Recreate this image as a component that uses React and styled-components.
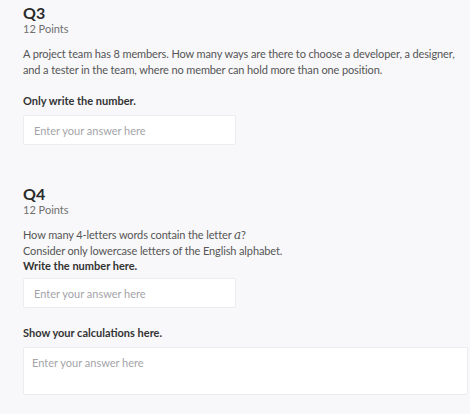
import React from "react";
import styled, { createGlobalStyle } from "styled-components";

const Global = createGlobalStyle`
  html, body { margin: 0; padding: 0; background: #f8f8fa; }
  body { font-family: Lato, "Open Sans", Arial, sans-serif; color: #4a4a4a; }
`;

const Page = styled.div`
  padding: 3px 2px 0 23px;
  display: flex;
  flex-direction: column;
`;

const Question = styled.section`
  display: flex;
  flex-direction: column;
  margin-bottom: ${(p) => p.$gap || 0}px;
`;

const Title = styled.h2`
  margin: 0;
  font-size: 16px;
  line-height: 19px;
  font-weight: 700;
  color: #2b2b2b;
`;

const Points = styled.div`
  font-size: 11px;
  line-height: 14px;
  color: #707070;
  margin-bottom: ${(p) => p.$mb}px;
`;

const Body = styled.p`
  margin: 0;
  font-size: 11px;
  line-height: ${(p) => p.$lh}px;
  letter-spacing: -0.12px;
  color: #555;
`;

const Label = styled.div`
  font-size: 11px;
  line-height: 15px;
  font-weight: 700;
  color: #333;
  margin-top: ${(p) => p.$mt || 0}px;
  margin-bottom: ${(p) => p.$mb || 0}px;
`;

const Input = styled.div`
  box-sizing: border-box;
  width: 213px;
  height: 30px;
  background: #fff;
  border: 1px solid #ececef;
  border-radius: 2px;
  padding: 0 10px;
  display: flex;
  align-items: center;
  font-size: 11px;
  color: #a4a4a8;
`;

const TextArea = styled.div`
  box-sizing: border-box;
  width: 445px;
  height: 48px;
  background: #fff;
  border: 1px solid #ececef;
  border-radius: 2px;
  padding: 8px 8px;
  font-size: 11px;
  line-height: 14px;
  color: #a4a4a8;
`;

const MathA = styled.span`
  font-family: "DejaVu Serif", "Liberation Serif", serif;
  font-style: italic;
  font-size: 12px;
`;

export default function App() {
  return (
    <>
      <Global />
      <Page>
        <Question $gap={39}>
          <Title>Q3</Title>
          <Points $mb={10}>12 Points</Points>
          <Body $lh={16}>
            A project team has 8 members. How many ways are there to choose a developer, a designer,
            <br />
            and a tester in the team, where no member can hold more than one position.
          </Body>
          <Label $mt={15} $mb={7}>Only write the number.</Label>
          <Input>Enter your answer here</Input>
        </Question>
        <Question>
          <Title>Q4</Title>
          <Points $mb={10}>12 Points</Points>
          <Body $lh={15}>
            How many 4-letters words contain the letter <MathA>a</MathA>?
            <br />
            Consider only lowercase letters of the English alphabet.
          </Body>
          <Label $mb={5}>Write the number here.</Label>
          <Input>Enter your answer here</Input>
          <Label $mt={17} $mb={7}>Show your calculations here.</Label>
          <TextArea>Enter your answer here</TextArea>
        </Question>
      </Page>
    </>
  );
}
